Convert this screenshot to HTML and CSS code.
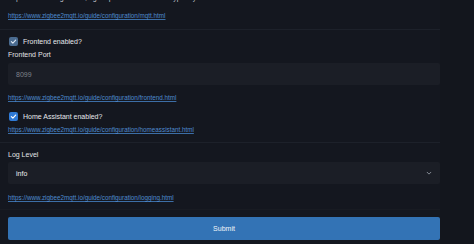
FILE: index.html
```html
<!DOCTYPE html>
<html>
<head>
<meta charset="utf-8">
<link rel="stylesheet" href="styles.css">
</head>
<body>
<div class="form">
  <div class="cut">Mqtt server configuration, eg. mqtt://localhost:1883 - typically</div>
  <div class="row linkrow l1"><a class="link" href="#">https://www.zigbee2mqtt.io/guide/configuration/mqtt.html</a></div>
  <div class="divider d1"></div>
  <label class="row check c1"><span class="box dim"><svg viewBox="0 0 10 10" width="9" height="9"><path d="M2.6 5.2 L4.3 6.9 L7.4 3.4" fill="none" stroke="#dfe8f3" stroke-width="1.2" stroke-linecap="round" stroke-linejoin="round"/></svg></span><span>Frontend enabled?</span></label>
  <div class="row label lb1">Frontend Port</div>
  <div class="row field f1"><span class="ph">8099</span></div>
  <div class="row linkrow l2"><a class="link" href="#">https://www.zigbee2mqtt.io/guide/configuration/frontend.html</a></div>
  <label class="row check c2"><span class="box"><svg viewBox="0 0 10 10" width="9" height="9"><path d="M2.6 5.2 L4.3 6.9 L7.4 3.4" fill="none" stroke="#ffffff" stroke-width="1.3" stroke-linecap="round" stroke-linejoin="round"/></svg></span><span>Home Assistant enabled?</span></label>
  <div class="row linkrow l3"><a class="link" href="#">https://www.zigbee2mqtt.io/guide/configuration/homeassistant.html</a></div>
  <div class="divider d2"></div>
  <div class="row label lb2">Log Level</div>
  <div class="row field sel"><span class="val">info</span><svg class="chev" viewBox="0 0 8 8" width="6" height="6"><path d="M1.5 3 L4 5.5 L6.5 3" fill="none" stroke="#9aa0aa" stroke-width="1.1" stroke-linecap="round" stroke-linejoin="round"/></svg></div>
  <div class="row linkrow l4"><a class="link" href="#">https://www.zigbee2mqtt.io/guide/configuration/logging.html</a></div>
  <div class="divider d3"></div>
  <div class="row btnrow"><button class="submit">Submit</button></div>
</div>
</body>
</html>
```
FILE: styles.css
```css
html, body {
  margin: 0;
  padding: 0;
  background: #13161d;
  overflow: hidden;
}
body {
  font-family: "Liberation Sans", Arial, sans-serif;
  font-size: 7px;
  color: #e4e6ea;
  width: 474px;
  height: 244px;
}
.form {
  width: 440px;
  display: flex;
  flex-direction: column;
  background: #14171f;
  min-height: 244px;
}
.row {
  padding-left: 8px;
}
.cut {
  height: 9px;
  line-height: 9px;
  margin-top: -7px;
  padding-left: 8px;
  color: #c8cad0;
  font-size: 7px;
  overflow: hidden;
  white-space: nowrap;
}
.linkrow {
  height: 8px;
  line-height: 8px;
  white-space: nowrap;
}
.link {
  color: #4f8ccf;
  font-size: 6.3px;
  text-decoration: underline;
  text-decoration-color: #3c6ea6;
}
.l1 { margin-top: 10px; }
.divider {
  height: 1px;
  background: #1d212a;
}
.d1 { margin-top: 9px; }
.check {
  display: flex;
  align-items: center;
  height: 10px;
  gap: 5px;
  font-size: 7px;
  color: #e6e8ec;
}
.box {
  width: 9px;
  height: 9px;
  border-radius: 2px;
  background: #2f7ad6;
  display: flex;
  align-items: center;
  justify-content: center;
  margin-left: 1px;
}
.box svg { display: block; }
.box.dim { background: #4a6b90; }
.c1 { margin-top: 6px; }
.label {
  height: 10px;
  line-height: 10px;
  font-size: 7px;
  color: #e2e3e6;
}
.lb1 { margin-top: 4px; }
.field {
  margin-left: 8px;
  padding-left: 8px;
  height: 22px;
  background: #1b1e26;
  border-radius: 2px;
  display: flex;
  align-items: center;
  font-size: 7px;
}
.f1 { margin-top: 3px; }
.ph { color: #7f838b; }
.l2 { margin-top: 9px; }
.c2 { margin-top: 9px; }
.l3 { margin-top: 5px; }
.d2 { margin-top: 8px; }
.lb2 { margin-top: 7px; }
.sel {
  margin-top: 2px;
  justify-content: space-between;
  padding-right: 8px;
}
.val { color: #eceef1; }
.chev { display: block; }
.l4 { margin-top: 10px; }
.d3 { margin-top: 7px; background: #181b22; }
.btnrow {
  margin-top: 7px;
}
.submit {
  display: block;
  width: 432px;
  height: 23px;
  border: none;
  border-radius: 2px;
  background: #3373b5;
  color: #f2f5f9;
  font-family: "Liberation Sans", Arial, sans-serif;
  font-size: 7px;
  padding: 0;
}
```
